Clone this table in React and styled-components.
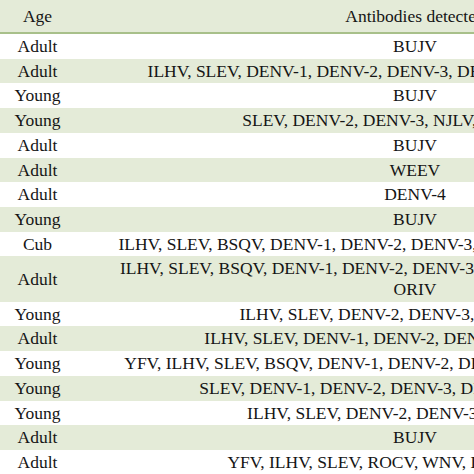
import React from "react";
import styled, { createGlobalStyle } from "styled-components";

const GlobalStyle = createGlobalStyle`
  html, body {
    margin: 0;
    padding: 0;
    background: #ffffff;
  }
`;

const Frame = styled.div`
  width: 474px;
  height: 474px;
  overflow: hidden;
  background: #ffffff;
`;

const Table = styled.table`
  width: 755px;
  table-layout: fixed;
  border-collapse: collapse;
  font-family: "Liberation Serif", "Times New Roman", serif;
  font-size: 17.5px;
  color: #151515;
`;

const HeadCell = styled.th`
  height: 32px;
  padding: 0;
  font-weight: normal;
  text-align: center;
  background: #e4ebd8;
  border-bottom: 2px solid #a8c08a;
  white-space: nowrap;
`;

const Row = styled.tr`
  background: ${(p) => (p.$shaded ? "#e4ebd8" : "#ffffff")};
`;

const Cell = styled.td`
  padding: 2px 0;
  line-height: 20.7px;
  text-align: center;
  vertical-align: middle;
  white-space: nowrap;
`;

const rows = [
  ["Adult", "BUJV"],
  ["Adult", "ILHV, SLEV, DENV-1, DENV-2, DENV-3, DENV-4, ROCV, WNV, MAYV"],
  ["Young", "BUJV"],
  ["Young", "SLEV, DENV-2, DENV-3, NJLV, ROCV, MAYV"],
  ["Adult", "BUJV"],
  ["Adult", "WEEV"],
  ["Adult", "DENV-4"],
  ["Young", "BUJV"],
  ["Cub", "ILHV, SLEV, BSQV, DENV-1, DENV-2, DENV-3, DENV-4, ROCV, BSQV, MAYV"],
  [
    "Adult",
    ["ILHV, SLEV, BSQV, DENV-1, DENV-2, DENV-3, DENV-4, ROCV, WNV, MAYV,", "ORIV"],
  ],
  ["Young", "ILHV, SLEV, DENV-2, DENV-3, DENV-4, WNV"],
  ["Adult", "ILHV, SLEV, DENV-1, DENV-2, DENV-3, DENV-4, WNV"],
  ["Young", "YFV, ILHV, SLEV, BSQV, DENV-1, DENV-2, DENV-3, DENV-4, ROCV, MAYV"],
  ["Young", "SLEV, DENV-1, DENV-2, DENV-3, DENV-4, WNV, MAYV"],
  ["Young", "ILHV, SLEV, DENV-2, DENV-3, ROCV, WNV"],
  ["Adult", "BUJV"],
  ["Adult", "YFV, ILHV, SLEV, ROCV, WNV, DENV-1, DENV-2"],
];

export default function App() {
  return (
    <>
      <GlobalStyle />
      <Frame>
        <Table>
          <colgroup>
            <col style={{ width: 75 }} />
            <col style={{ width: 680 }} />
          </colgroup>
          <thead>
            <tr>
              <HeadCell>Age</HeadCell>
              <HeadCell>Antibodies detected</HeadCell>
            </tr>
          </thead>
          <tbody>
            {rows.map(([age, found], i) => (
              <Row key={i} $shaded={i % 2 === 1}>
                <Cell>{age}</Cell>
                <Cell>
                  {Array.isArray(found)
                    ? found.map((line, j) => (
                        <React.Fragment key={j}>
                          {j > 0 && <br />}
                          {line}
                        </React.Fragment>
                      ))
                    : found}
                </Cell>
              </Row>
            ))}
          </tbody>
        </Table>
      </Frame>
    </>
  );
}
